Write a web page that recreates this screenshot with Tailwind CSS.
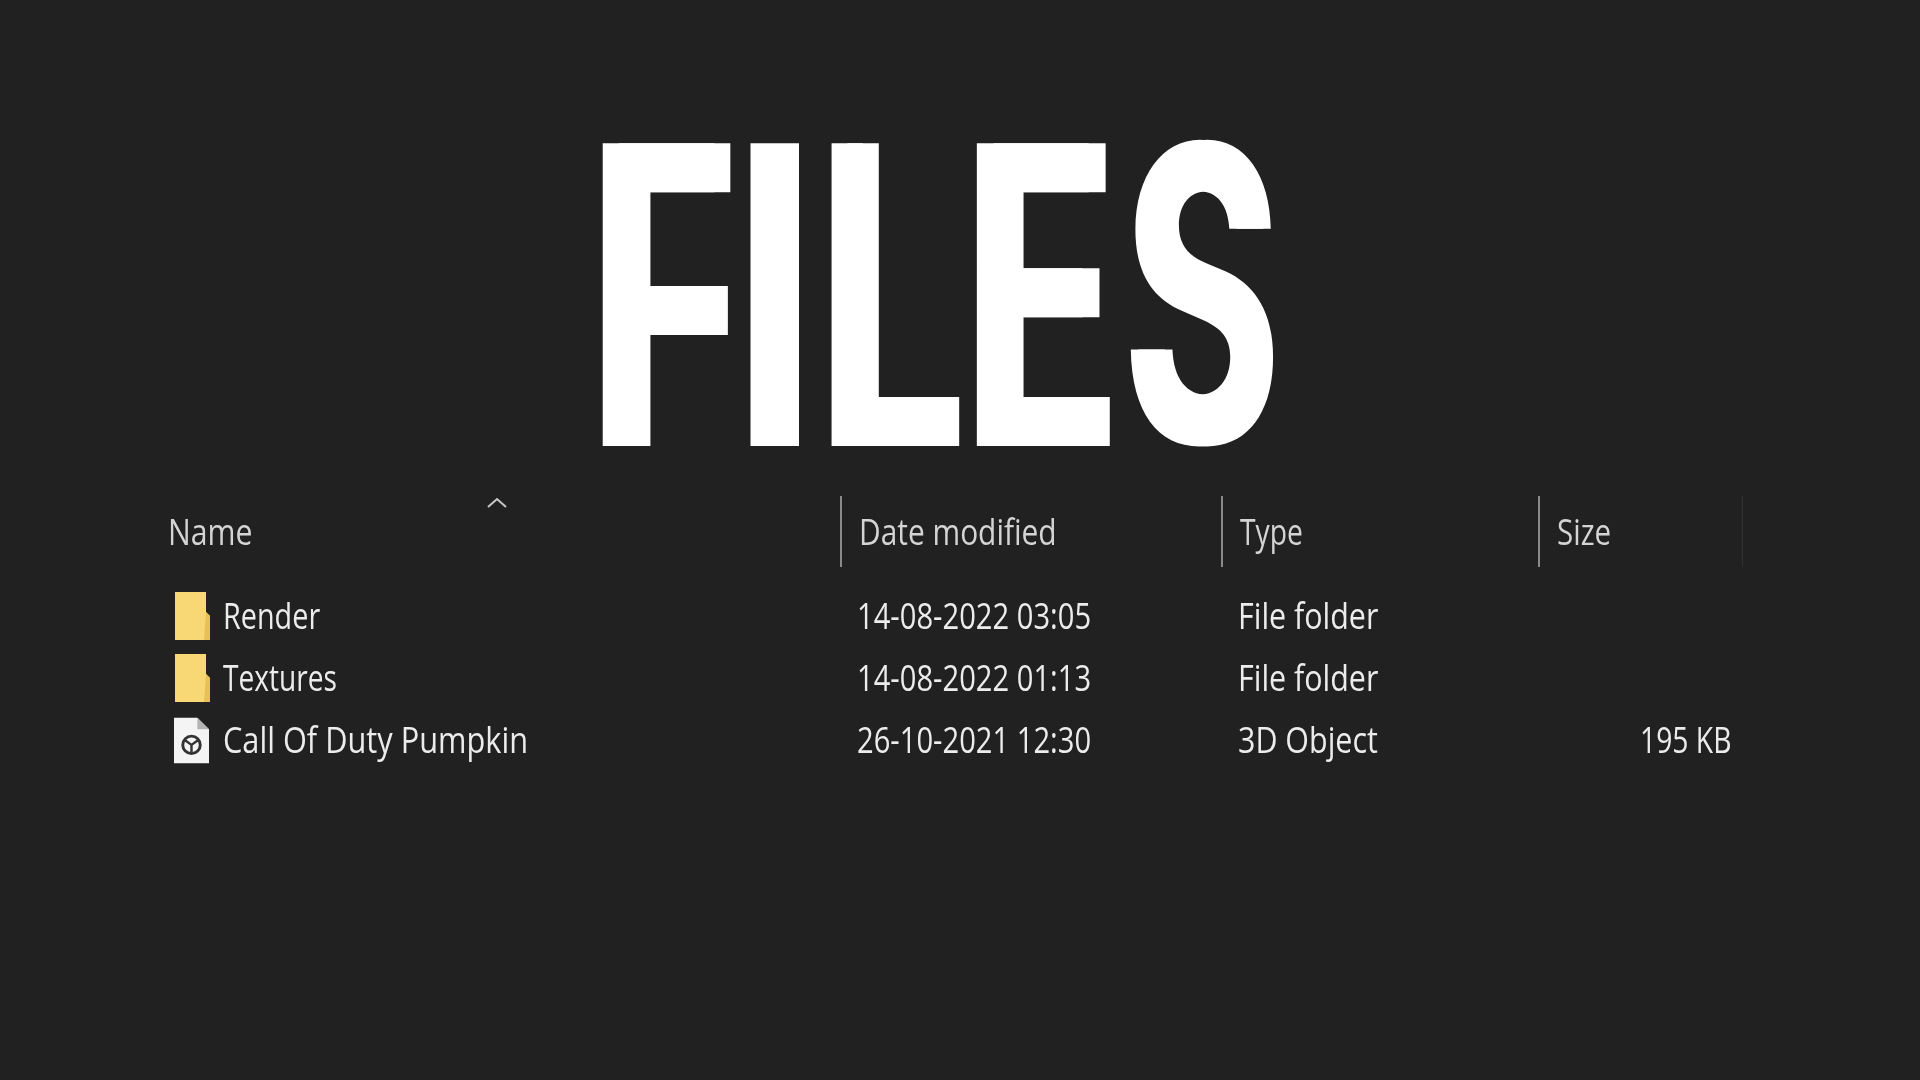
<!DOCTYPE html>
<html lang="en">
<head>
  <meta charset="UTF-8">
  <title>Files</title>
  <script src="https://cdn.jsdelivr.net/npm/@tailwindcss/browser@4"></script>
</head>
<body class="bg-[#212121] h-screen overflow-hidden font-['Open_Sans',sans-serif]">
  <!-- Title -->
  <section class="h-[496px] pt-[142px] pl-[588px] flex font-['Liberation_Sans',sans-serif] font-bold text-white text-[440px] leading-[303px]">
    <span class="block w-[140px] origin-left scale-x-[0.5] [text-shadow:32px_0_0_#fff]">F</span>
    <span class="block w-[89px] origin-left scale-x-[0.765]">I</span>
    <span class="block w-[146px] origin-left scale-x-[0.495] [text-shadow:32px_0_0_#fff]">L</span>
    <span class="block w-[158px] origin-left scale-x-[0.47] [text-shadow:36px_0_0_#fff]">E</span>
    <span class="block origin-left scale-x-[0.575] font-['Inter',sans-serif] text-[410px] [text-shadow:13px_0_0_#fff]">S</span>
  </section>

  <!-- Explorer listing -->
  <section class="ml-[168px] w-[1575px] text-[36px] blur-[0.5px]">
    <div class="relative grid grid-cols-[672px_381px_317px_205px] h-[71px] items-stretch text-[#d4d4d4]">
      <svg class="absolute left-[319px] top-[1px] w-[20px] h-[11px]" viewBox="0 0 20 11" fill="none" stroke="#c8c8c8" stroke-width="2"><path d="M1 10 L10 2 L19 10"/></svg>
      <div class="flex items-center"><span class="origin-left scale-x-[0.84]">Name</span></div>
      <div class="flex items-center pl-[17px] border-l-2 border-[#8a8a8a]"><span class="origin-left scale-x-[0.83]">Date modified</span></div>
      <div class="flex items-center pl-[17px] border-l-2 border-[#8a8a8a]"><span class="origin-left scale-x-[0.785]">Type</span></div>
      <div class="flex items-center pl-[17px] border-l-2 border-r border-l-[#8a8a8a] border-r-[#303030]"><span class="origin-left scale-x-[0.82]">Size</span></div>
    </div>

    <div class="mt-[18px] text-[#ececec]">
      <div class="grid grid-cols-[672px_381px_317px_205px] h-[62px] items-center">
        <div class="flex items-center">
          <svg class="ml-[7px] w-[35px] h-[48px] shrink-0" viewBox="0 0 35 48"><path d="M0 0H31V20L35 24V48H0Z" fill="#f8d775"/><path d="M31 20L35 24V48H29Z" fill="#e9bf57"/></svg>
          <span class="ml-[13px] origin-left scale-x-[0.8]">Render</span>
        </div>
        <div class="pl-[17px]"><span class="inline-block origin-left scale-x-[0.81]">14-08-2022 03:05</span></div>
        <div class="pl-[17px]"><span class="inline-block origin-left scale-x-[0.845]">File folder</span></div>
        <div></div>
      </div>
      <div class="grid grid-cols-[672px_381px_317px_205px] h-[62px] items-center">
        <div class="flex items-center">
          <svg class="ml-[7px] w-[35px] h-[48px] shrink-0" viewBox="0 0 35 48"><path d="M0 0H31V20L35 24V48H0Z" fill="#f8d775"/><path d="M31 20L35 24V48H29Z" fill="#e9bf57"/></svg>
          <span class="ml-[13px] origin-left scale-x-[0.78]">Textures</span>
        </div>
        <div class="pl-[17px]"><span class="inline-block origin-left scale-x-[0.81]">14-08-2022 01:13</span></div>
        <div class="pl-[17px]"><span class="inline-block origin-left scale-x-[0.845]">File folder</span></div>
        <div></div>
      </div>
      <div class="grid grid-cols-[672px_381px_317px_205px] h-[62px] items-center">
        <div class="flex items-center">
          <svg class="ml-[6px] w-[35px] h-[47px] shrink-0" viewBox="0 0 36 47" fill="none"><path d="M0 0H24L36 12V47H0Z" fill="#f4f4f4"/><path d="M24 0V12H36Z" fill="#b5b5b5"/><circle cx="18" cy="28" r="9" stroke="#333" stroke-width="3"/><path d="M11 23L18 28L25 23M18 28V36" stroke="#333" stroke-width="2.5"/></svg>
          <span class="ml-[14px] origin-left scale-x-[0.854]">Call Of Duty Pumpkin</span>
        </div>
        <div class="pl-[17px]"><span class="inline-block origin-left scale-x-[0.81]">26-10-2021 12:30</span></div>
        <div class="pl-[17px]"><span class="inline-block origin-left scale-x-[0.845]">3D Object</span></div>
        <div class="text-right pr-[12px]"><span class="inline-block origin-right scale-x-[0.785]">195 KB</span></div>
      </div>
    </div>
  </section>
</body>
</html>
